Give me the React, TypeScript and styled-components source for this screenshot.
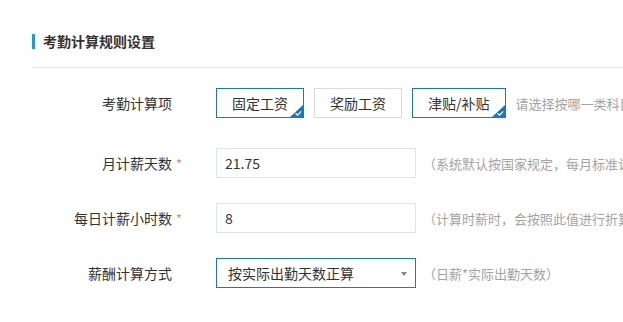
import React from "react";
import styled, { createGlobalStyle } from "styled-components";

const GlobalStyle = createGlobalStyle`
  html, body {
    margin: 0;
    padding: 0;
    background: #fff;
    overflow: hidden;
  }
  body {
    font-family: "Microsoft YaHei", "Noto Sans CJK SC", "Noto Sans", sans-serif;
    color: #333;
  }
`;

const Page = styled.div`
  width: 623px;
  height: 322px;
  padding: 34px 0 0 32px;
  box-sizing: border-box;
  overflow: hidden;
`;

const Header = styled.div`
  height: 15px;
  border-left: 3px solid #2196e3;
  padding-left: 8px;
  display: flex;
  align-items: center;
  font-size: 14px;
  font-weight: 700;
  color: #333;
  line-height: 15px;
`;

const Divider = styled.div`
  height: 1px;
  background: #e8e8e8;
  margin-top: 18px;
`;

const Form = styled.div`
  display: flex;
  flex-direction: column;
  padding-top: 20px;
`;

const Row = styled.div<{ $gapBelow: number }>`
  display: flex;
  align-items: center;
  height: 30px;
  margin-bottom: ${(p) => p.$gapBelow}px;
  white-space: nowrap;
`;

const Label = styled.div`
  width: 140px;
  flex-shrink: 0;
  text-align: right;
  font-size: 14px;
  color: #333;
`;

const Star = styled.span`
  width: 44px;
  flex-shrink: 0;
  box-sizing: border-box;
  padding-left: 4px;
  font-size: 13px;
  color: #ef7f8a;
`;

const Options = styled.div`
  display: flex;
  gap: 10px;
  flex-shrink: 0;
`;

const Option = styled.div<{ $active?: boolean }>`
  position: relative;
  height: 30px;
  box-sizing: border-box;
  padding: 0 15px;
  display: flex;
  align-items: center;
  font-size: 14px;
  color: #333;
  background: #fff;
  border: 1px solid ${(p) => (p.$active ? "#1a74c9" : "#d9d9d9")};
  overflow: hidden;
`;

const Corner = styled.svg`
  position: absolute;
  right: 0;
  bottom: 0;
  width: 13px;
  height: 12px;
`;

const Input = styled.div`
  width: 200px;
  height: 30px;
  flex-shrink: 0;
  box-sizing: border-box;
  border: 1px solid #dde5ed;
  padding-left: 8px;
  display: flex;
  align-items: center;
  font-size: 14px;
  color: #333;
`;

const Select = styled(Input)`
  border-color: #1a74c9;
  padding: 0 8px 0 11px;
  justify-content: space-between;
`;

const Arrow = styled.span`
  width: 0;
  height: 0;
  border-left: 3px solid transparent;
  border-right: 3px solid transparent;
  border-top: 4px solid #888;
  margin-top: 1px;
`;

const Hint = styled.span<{ $offset: number }>`
  margin-left: ${(p) => p.$offset}px;
  font-size: 13px;
  color: #a3a3a3;
`;

const Check = () => (
  <Corner viewBox="0 0 13 12">
    <polygon points="13,0 13,12 0,12" fill="#1a74c9" />
    <polyline
      points="5.5,8.2 7.6,10.2 11.2,6.3"
      fill="none"
      stroke="#fff"
      strokeWidth="1.2"
    />
  </Corner>
);

const items = [
  { name: "固定工资", active: true },
  { name: "奖励工资", active: false },
  { name: "津贴/补贴", active: true },
];

export default function App() {
  return (
    <>
      <GlobalStyle />
      <Page>
        <Header>考勤计算规则设置</Header>
        <Divider />
        <Form>
          <Row $gapBelow={30}>
            <Label>考勤计算项</Label>
            <Star />
            <Options>
              {items.map((it) => (
                <Option key={it.name} $active={it.active}>
                  {it.name}
                  {it.active && <Check />}
                </Option>
              ))}
            </Options>
            <Hint $offset={10}>请选择按哪一类科目作为考勤计算基数</Hint>
          </Row>
          <Row $gapBelow={25}>
            <Label>月计薪天数</Label>
            <Star>*</Star>
            <Input>21.75</Input>
            <Hint $offset={7}>（系统默认按国家规定，每月标准计薪天数为21.75天）</Hint>
          </Row>
          <Row $gapBelow={25}>
            <Label>每日计薪小时数</Label>
            <Star>*</Star>
            <Input>8</Input>
            <Hint $offset={7}>（计算时薪时，会按照此值进行折算）</Hint>
          </Row>
          <Row $gapBelow={0}>
            <Label>薪酬计算方式</Label>
            <Star />
            <Select>
              按实际出勤天数正算
              <Arrow />
            </Select>
            <Hint $offset={7}>（日薪*实际出勤天数）</Hint>
          </Row>
        </Form>
      </Page>
    </>
  );
}
